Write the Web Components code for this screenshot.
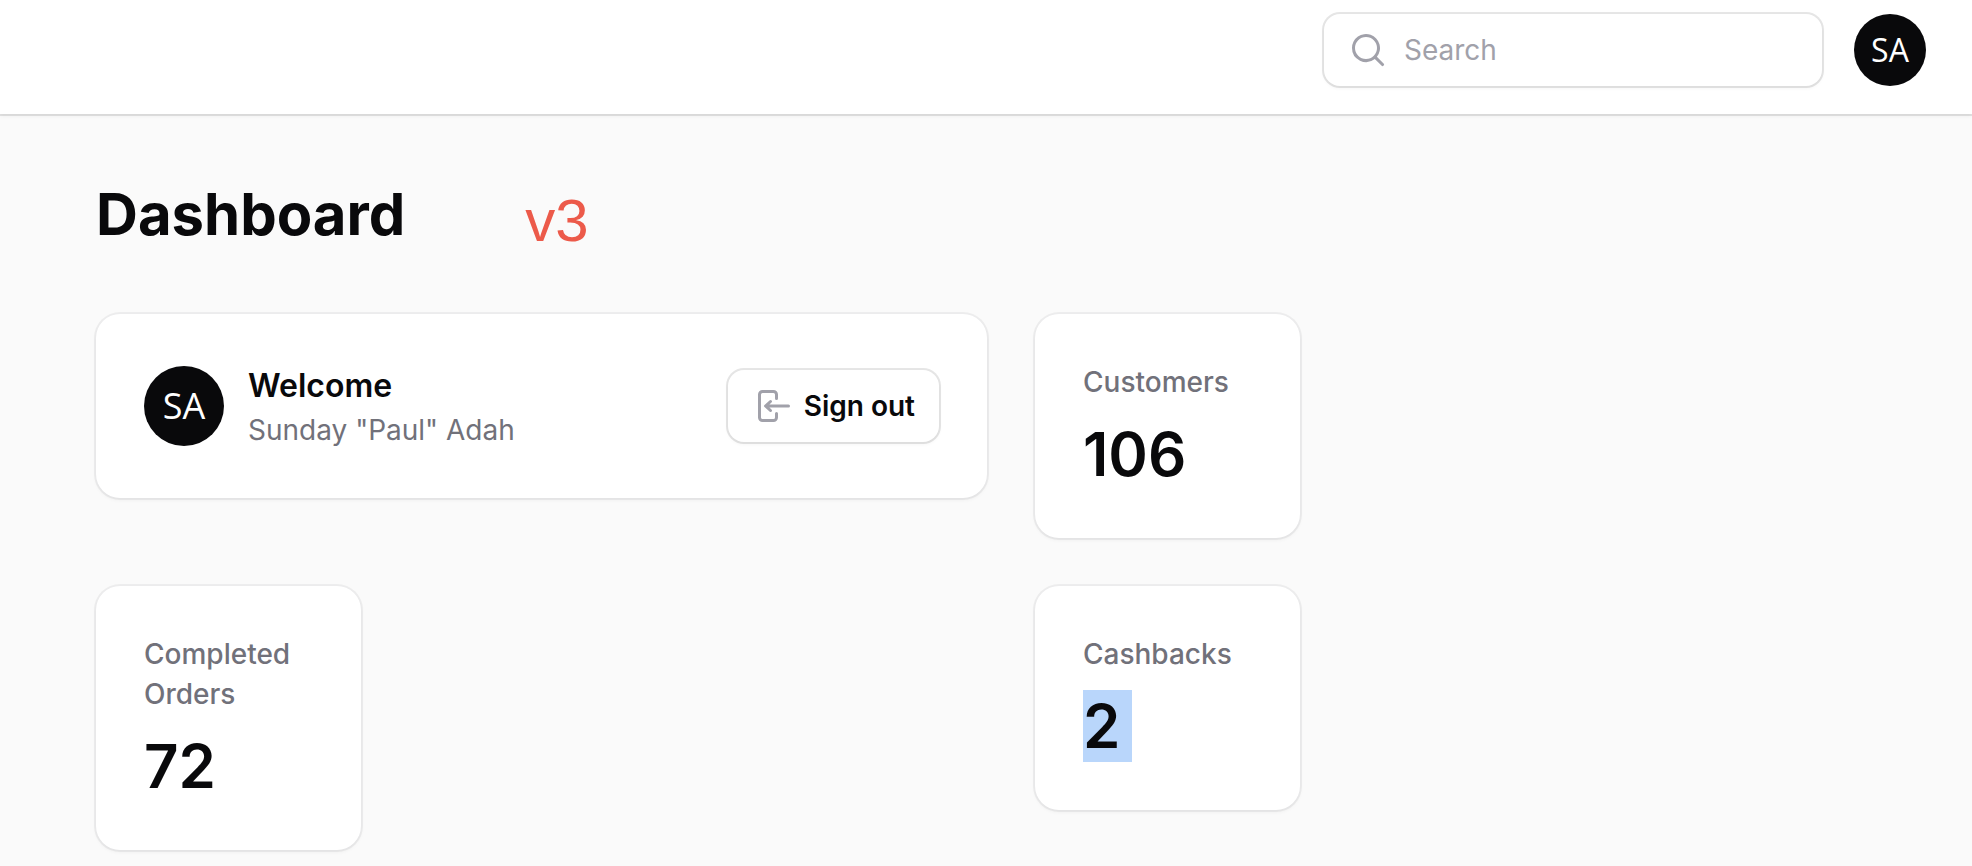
<!DOCTYPE html>
<html lang="en">
<head>
  <meta charset="UTF-8">
  <meta name="viewport" content="width=device-width, initial-scale=1.0">
  <title>Dashboard</title>
  <style>
    body {
      margin: 0;
      min-height: 100vh;
      background-color: #fafafa;
      color: #09090b;
      font-family: Inter, 'Liberation Sans', sans-serif;
      font-size: 28px;
      line-height: 40px;
      -webkit-font-smoothing: antialiased;
    }

    main {
      padding: 64px 46px 12px 96px;
    }
  </style>
</head>
<body>

<template id="avatar-template">
  <style>
    :host {
      display: flex;
      flex: none;
      align-items: center;
      justify-content: center;
      width: 72px;
      height: 72px;
      border-radius: 50%;
      background-color: #09090b;
      color: #fff;
      font-family: 'Open Sans', 'Noto Sans', sans-serif;
      font-size: 32px;
    }

    :host([size="large"]) {
      width: 80px;
      height: 80px;
      font-size: 36px;
    }
  </style>
  <slot></slot>
</template>

<template id="search-template">
  <style>
    :host {
      display: block;
      width: 498px;
    }

    label {
      display: flex;
      align-items: center;
      gap: 16px;
      height: 72px;
      padding: 0 24px;
      box-sizing: border-box;
      border-radius: 16px;
      background-color: #fff;
      box-shadow: 0 0 0 2px rgba(9, 9, 11, 0.1), 0 2px 4px rgba(0, 0, 0, 0.05);
    }

    svg {
      flex: none;
      width: 40px;
      height: 40px;
      fill: #a1a1aa;
    }

    input {
      flex: 1;
      min-width: 0;
      padding: 0;
      border: none;
      outline: none;
      background: none;
      color: inherit;
      font: inherit;
    }

    input::placeholder {
      color: #a1a1aa;
      opacity: 1;
    }
  </style>
  <label>
    <svg viewBox="0 0 20 20" aria-hidden="true">
      <path fill-rule="evenodd" clip-rule="evenodd" d="M9 3.5a5.5 5.5 0 1 0 0 11 5.5 5.5 0 0 0 0-11ZM2 9a7 7 0 1 1 12.452 4.391l3.328 3.329a.75.75 0 1 1-1.06 1.06l-3.329-3.328A7 7 0 0 1 2 9Z"/>
    </svg>
    <input type="text" placeholder="Search" aria-label="Search">
  </label>
</template>

<template id="topbar-template">
  <style>
    :host {
      display: block;
      background-color: #fff;
      box-shadow: 0 0 0 2px rgba(9, 9, 11, 0.1), 0 2px 4px rgba(0, 0, 0, 0.05);
    }

    header {
      display: flex;
      align-items: center;
      justify-content: flex-end;
      gap: 32px;
      padding: 14px 46px 28px;
    }
  </style>
  <header>
    <search-field></search-field>
    <slot></slot>
  </header>
</template>

<template id="heading-template">
  <style>
    :host {
      display: flex;
      align-items: flex-start;
      gap: 120px;
      margin-bottom: 50px;
    }

    h1 {
      margin: 0;
      font-size: 58px;
      font-weight: 700;
      line-height: 72px;
    }

    span {
      color: #ec5a4a;
      font-family: 'Liberation Sans', Arial, sans-serif;
      font-size: 60px;
      line-height: 86px;
    }
  </style>
  <h1><slot></slot></h1>
  <span><slot name="version"></slot></span>
</template>

<template id="grid-template">
  <style>
    :host {
      display: grid;
      grid-template-columns: repeat(2, minmax(0, 1fr));
      align-items: start;
      gap: 48px;
    }
  </style>
  <slot></slot>
</template>

<template id="stats-template">
  <style>
    :host {
      display: grid;
      grid-template-columns: repeat(3, minmax(0, 1fr));
      gap: 48px;
    }
  </style>
  <slot></slot>
</template>

<template id="account-template">
  <style>
    :host {
      display: flex;
      align-items: center;
      gap: 24px;
      padding: 48px;
      border-radius: 24px;
      background-color: #fff;
      box-shadow: 0 0 0 2px rgba(9, 9, 11, 0.05), 0 2px 4px rgba(0, 0, 0, 0.05);
    }

    .text {
      flex: 1;
    }

    h2, p {
      margin: 0;
    }

    h2 {
      font-size: 32px;
      font-weight: 600;
      line-height: 48px;
    }

    p {
      color: #71717a;
    }

    button {
      display: flex;
      align-items: center;
      gap: 12px;
      padding: 16px 24px;
      border: none;
      border-radius: 16px;
      background-color: #fff;
      box-shadow: 0 0 0 2px rgba(9, 9, 11, 0.1), 0 2px 4px rgba(0, 0, 0, 0.05);
      color: inherit;
      font: inherit;
      font-weight: 600;
      cursor: pointer;
    }

    button:hover {
      background-color: #fafafa;
    }

    svg {
      width: 40px;
      height: 40px;
      fill: #a1a1aa;
    }
  </style>
  <user-avatar size="large">SA</user-avatar>
  <div class="text">
    <h2>Welcome</h2>
    <p><slot></slot></p>
  </div>
  <button type="button">
    <svg viewBox="0 0 20 20" aria-hidden="true">
      <path fill-rule="evenodd" clip-rule="evenodd" d="M3 4.25A2.25 2.25 0 0 1 5.25 2h5.5A2.25 2.25 0 0 1 13 4.25v2a.75.75 0 0 1-1.5 0v-2a.75.75 0 0 0-.75-.75h-5.5a.75.75 0 0 0-.75.75v11.5c0 .414.336.75.75.75h5.5a.75.75 0 0 0 .75-.75v-2a.75.75 0 0 1 1.5 0v2A2.25 2.25 0 0 1 10.75 18h-5.5A2.25 2.25 0 0 1 3 15.75V4.25Z"/>
      <path fill-rule="evenodd" clip-rule="evenodd" d="M19 10a.75.75 0 0 0-.75-.75H8.704l1.048-.943a.75.75 0 1 0-1.004-1.114l-2.5 2.25a.75.75 0 0 0 0 1.114l2.5 2.25a.75.75 0 1 0 1.004-1.114l-1.048-.943h9.546A.75.75 0 0 0 19 10Z"/>
    </svg>
    Sign out
  </button>
</template>

<template id="stat-template">
  <style>
    :host {
      display: flex;
      flex-direction: column;
      gap: 16px;
      padding: 48px;
      border-radius: 24px;
      background-color: #fff;
      box-shadow: 0 0 0 2px rgba(9, 9, 11, 0.05), 0 2px 4px rgba(0, 0, 0, 0.05);
    }

    .label {
      color: #71717a;
      font-weight: 500;
    }

    .value {
      font-size: 60px;
      font-weight: 600;
      line-height: 72px;
    }

    /* selected value: the highlight runs on past the last digit */
    :host([selected]) .value span {
      padding-right: 12px;
      background-color: #b9d6fb;
    }
  </style>
  <div class="label"></div>
  <div class="value"><span><slot></slot></span></div>
</template>

<script>
  class TemplateElement extends HTMLElement {
    constructor(templateId) {
      super();
      this.attachShadow({ mode: 'open' });
      this.shadowRoot.appendChild(document.getElementById(templateId).content.cloneNode(true));
    }
  }

  customElements.define('user-avatar', class extends TemplateElement {
    constructor() { super('avatar-template'); }
  });

  customElements.define('search-field', class extends TemplateElement {
    constructor() { super('search-template'); }
  });

  customElements.define('top-bar', class extends TemplateElement {
    constructor() { super('topbar-template'); }
  });

  customElements.define('page-heading', class extends TemplateElement {
    constructor() { super('heading-template'); }
  });

  customElements.define('widget-grid', class extends TemplateElement {
    constructor() { super('grid-template'); }
  });

  customElements.define('stats-overview', class extends TemplateElement {
    constructor() { super('stats-template'); }
  });

  customElements.define('account-card', class extends TemplateElement {
    constructor() { super('account-template'); }
  });

  class StatCard extends TemplateElement {
    constructor() {
      super('stat-template');
    }

    connectedCallback() {
      this.shadowRoot.querySelector('.label').textContent = this.getAttribute('label');
    }
  }

  customElements.define('stat-card', StatCard);
</script>

<top-bar><user-avatar>SA</user-avatar></top-bar>

<main>
  <page-heading>Dashboard<span slot="version">v3</span></page-heading>
  <widget-grid>
    <account-card>Sunday "Paul" Adah</account-card>
    <stats-overview>
      <stat-card label="Customers">106</stat-card>
    </stats-overview>
    <stats-overview>
      <stat-card label="Completed Orders">72</stat-card>
    </stats-overview>
    <stats-overview>
      <stat-card label="Cashbacks" selected>2</stat-card>
    </stats-overview>
  </widget-grid>
</main>

</body>
</html>
